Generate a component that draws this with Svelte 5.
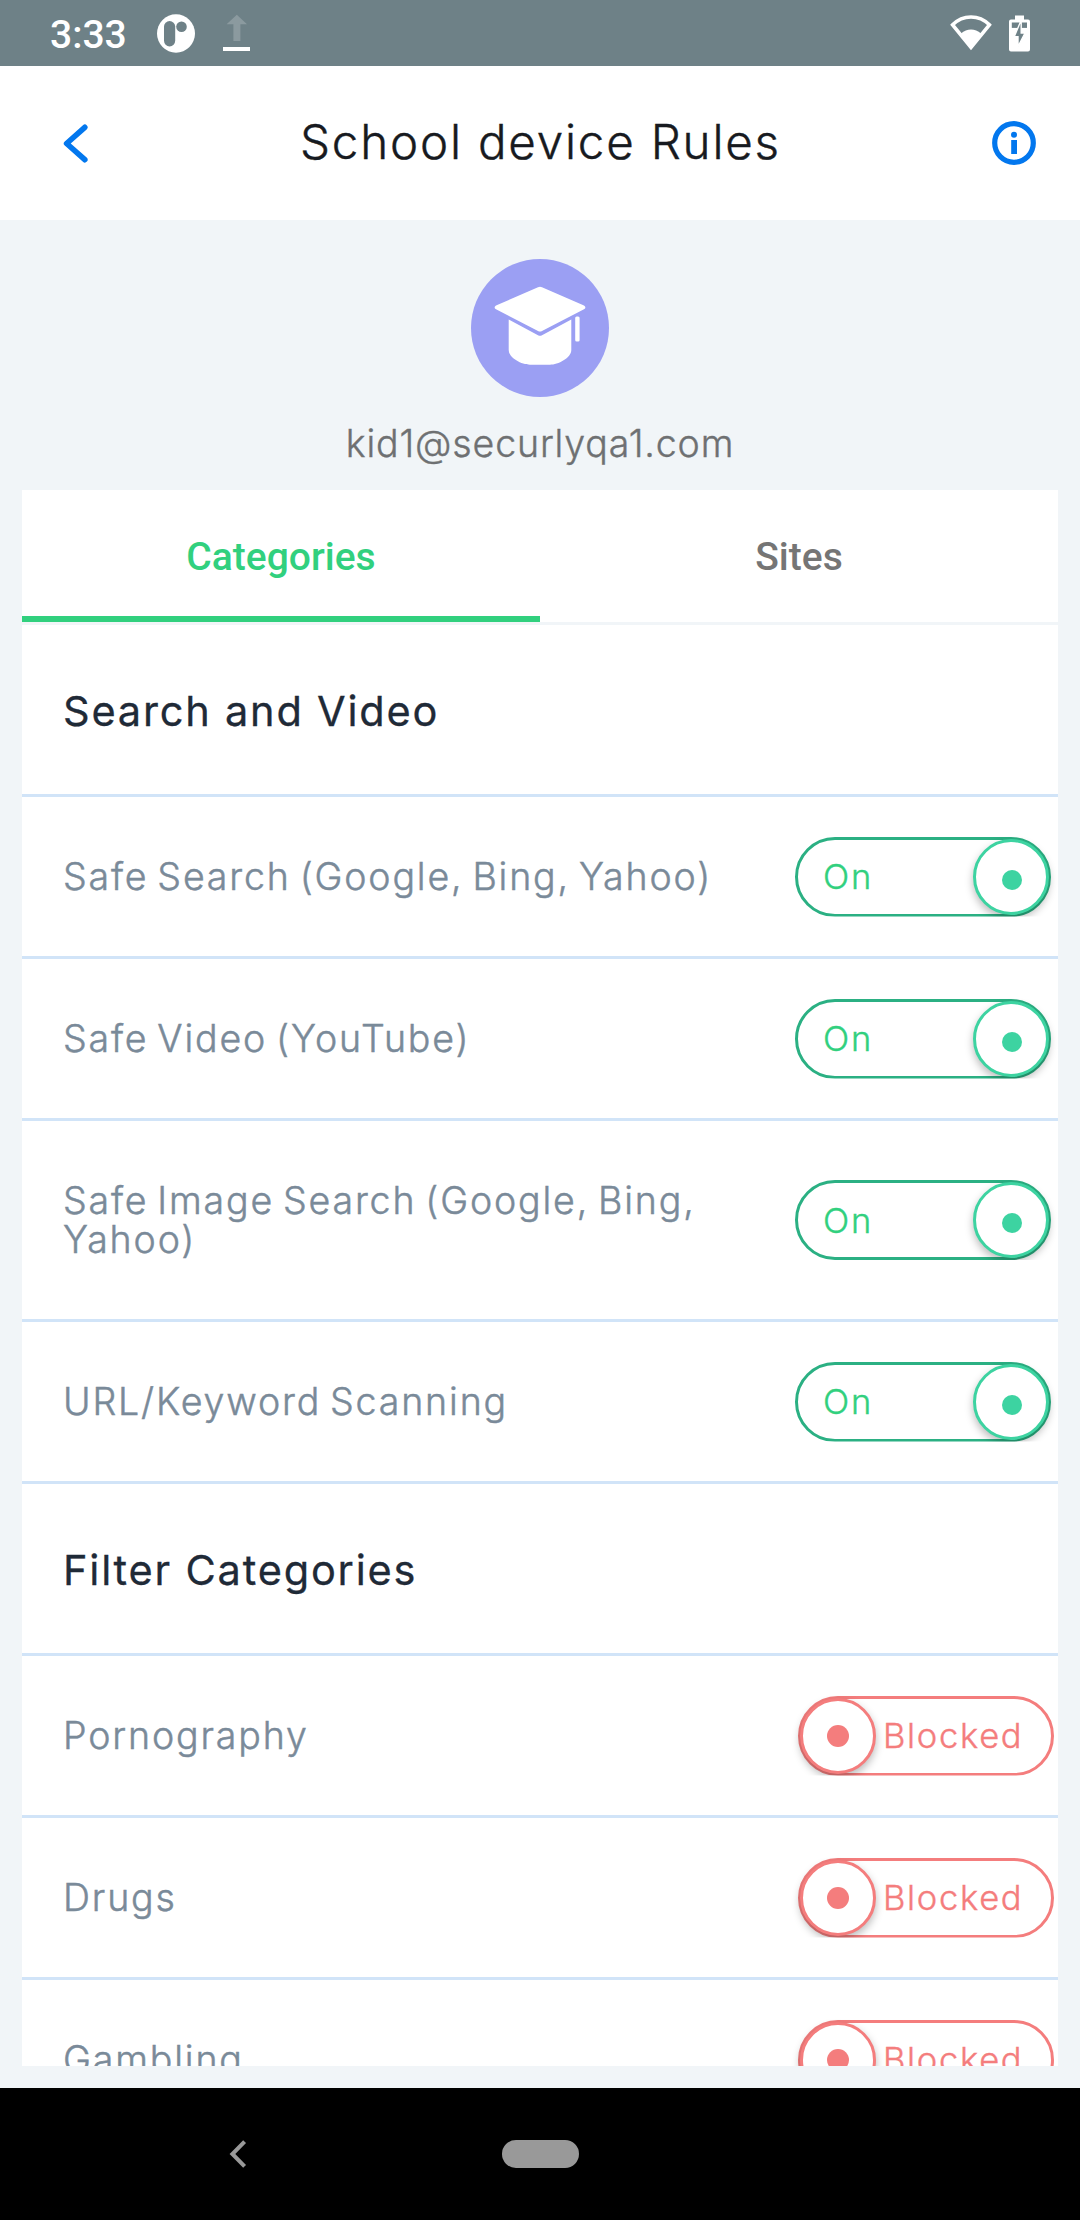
<script lang="ts">
  type Rule = { label: string; state: 'on' | 'blocked' };
  type Section = { title: string; rules: Rule[] };

  const account = 'kid1@securlyqa1.com';
  const tabs = ['Categories', 'Sites'];
  let activeTab = $state('Categories');

  const sections: Section[] = [
    {
      title: 'Search and Video',
      rules: [
        { label: 'Safe Search (Google, Bing, Yahoo)', state: 'on' },
        { label: 'Safe Video (YouTube)', state: 'on' },
        { label: 'Safe Image Search (Google, Bing, Yahoo)', state: 'on' },
        { label: 'URL/Keyword Scanning', state: 'on' }
      ]
    },
    {
      title: 'Filter Categories',
      rules: [
        { label: 'Pornography', state: 'blocked' },
        { label: 'Drugs', state: 'blocked' },
        { label: 'Gambling', state: 'blocked' }
      ]
    }
  ];
</script>

<div class="screen">
  <div class="status-bar">
    <span class="clock">3:33</span>
    <svg class="status-app" width="38" height="39" viewBox="0 0 38 39">
      <ellipse cx="19" cy="19.5" rx="19" ry="19.2" fill="#fff" />
      <rect x="7" y="7" width="11.2" height="25.4" rx="5.6" fill="#6e8187" />
      <circle cx="24.5" cy="12.8" r="5.3" fill="#6e8187" />
    </svg>
    <svg class="status-upload" width="28" height="38" viewBox="0 0 28 38">
      <path d="M13.8 0.7 L24 10.2 H17.4 V27 H10.4 V10.2 H3.6 Z" fill="#8b9a9f" />
      <rect x="0" y="33" width="27" height="4" fill="#fff" />
    </svg>
    <div class="status-right">
      <svg width="42" height="36" viewBox="0 0 42 36">
        <path d="M2.6 9.8 C13 -0.6 29 -0.6 39.4 9.8 L21 32.5 Z" fill="none" stroke="#fff" stroke-width="3.6" />
        <path d="M11 18.5 C17 13 25 13 31 18.5 L21 33 Z" fill="#fff" />
      </svg>
      <svg width="21" height="37" viewBox="0 0 21 37">
        <path d="M6 0.5 H15 V4.5 H19 Q21 4.5 21 6.5 V34.5 Q21 36.5 19 36.5 H2 Q0 36.5 0 34.5 V6.5 Q0 4.5 2 4.5 H6 Z" fill="#fff" />
        <rect x="2.8" y="7.5" width="15.2" height="5.4" fill="#6e8187" />
        <path d="M11.6 6.5 L5.2 21.8 H9 V31.5 L16 18 H12.2 V6.5 Z" fill="#6e8187" stroke="#fff" stroke-width="1.4" />
      </svg>
    </div>
  </div>

  <header>
    <button class="icon-button" aria-label="Back">
      <svg width="26" height="42" viewBox="0 0 26 42">
        <path d="M21.8 5.3 L3.6 21.5 L21.8 37.7" fill="none" stroke="#0277ee" stroke-width="5.6" stroke-linecap="round" stroke-linejoin="round" />
      </svg>
    </button>
    <h1>School device Rules</h1>
    <button class="icon-button" aria-label="Info">
      <svg width="44" height="44" viewBox="0 0 44 44">
        <circle cx="22" cy="22" r="19.3" fill="none" stroke="#0277ee" stroke-width="5.2" />
        <circle cx="22" cy="13.8" r="3" fill="#0277ee" />
        <rect x="19.2" y="19" width="5.8" height="14" fill="#0277ee" />
      </svg>
    </button>
  </header>

  <div class="profile">
    <svg width="138" height="138" viewBox="0 0 138 138">
      <circle cx="69" cy="69" r="69" fill="#9b9ff3" />
      <path d="M67 28.3 Q69 27.4 71 28.3 L113 46.6 Q115.8 48.4 113 50.2 L71 72 Q69 73 67 72 L25 50.2 Q22.2 48.4 25 46.6 Z" fill="#fff" />
      <path d="M37.7 60.5 L67 76.2 Q69 77.2 71 76.2 L100.3 60.5 V91 C100.3 99 87 105.7 79 105.7 H59 C51 105.7 37.7 99 37.7 91 Z" fill="#fff" />
      <rect x="104.2" y="57.6" width="4.4" height="25" rx="1.5" fill="#fff" />
    </svg>
    <span class="account">{account}</span>
  </div>

  <main>
    <div class="tabs">
      {#each tabs as tab}
        <button class="tab" class:active={tab === activeTab} onclick={() => (activeTab = tab)}>{tab}</button>
      {/each}
    </div>

    {#each sections as section}
      <h2>{section.title}</h2>
      {#each section.rules as rule}
        <div class="rule">
          <span class="rule-label">{rule.label}</span>
          {#if rule.state === 'on'}
            <button class="toggle on">
              <span>On</span>
              <i class="knob"></i>
            </button>
          {:else}
            <button class="toggle blocked">
              <i class="knob"></i>
              <span>Blocked</span>
            </button>
          {/if}
        </div>
      {/each}
    {/each}
  </main>

  <nav>
    <svg class="nav-back" width="18" height="28" viewBox="0 0 18 28">
      <path d="M15.6 1.6 L3.4 14 L15.6 26.4" fill="none" stroke="#999" stroke-width="4" />
    </svg>
    <div class="nav-home"></div>
  </nav>
</div>

<style>
  :global(body) {
    margin: 0;
    background: #f1f5f8;
  }

  .screen {
    display: flex;
    flex-direction: column;
    width: 1080px;
    height: 2220px;
    overflow: hidden;
    background: #f1f5f8;
    font-family: Inter, "Liberation Sans", sans-serif;
  }

  button {
    border: none;
    background: none;
    padding: 0;
    margin: 0;
    font-family: inherit;
  }

  svg {
    display: block;
    flex: none;
  }

  .status-bar {
    flex: none;
    display: flex;
    align-items: center;
    height: 66px;
    padding: 0 50px;
    box-sizing: border-box;
    background: #6e8187;
  }

  .clock {
    width: 107px;
    padding-top: 3px;
    font-family: Roboto, sans-serif;
    font-size: 39px;
    font-weight: 500;
    color: #fff;
  }

  .status-upload {
    margin-left: 28px;
  }

  .status-right {
    display: flex;
    align-items: center;
    gap: 17px;
    margin-left: auto;
  }

  header {
    flex: none;
    display: flex;
    align-items: center;
    justify-content: space-between;
    height: 154px;
    padding: 0 44px 0 63px;
    box-sizing: border-box;
    background: #fff;
  }

  h1 {
    margin: 0;
    padding-bottom: 3px;
    font-size: 47.5px;
    font-weight: 300;
    letter-spacing: 1.8px;
    color: #171a20;
    -webkit-text-stroke: 0.4px;
  }

  .profile {
    flex: none;
    display: flex;
    flex-direction: column;
    align-items: center;
    height: 270px;
    padding-top: 39px;
    box-sizing: border-box;
  }

  .account {
    margin-top: 24px;
    font-size: 37.5px;
    font-weight: 300;
    letter-spacing: 0.85px;
    line-height: 46px;
    color: #6e7072;
    -webkit-text-stroke: 0.4px;
  }

  main {
    flex: 1;
    min-height: 0;
    margin: 0 22px 22px;
    overflow: hidden;
    background: #fff;
  }

  .tabs {
    display: flex;
    height: 132px;
    border-bottom: 3px solid #f1f5f8;
  }

  .tab {
    flex: 1;
    padding-top: 8px;
    border-bottom: 6px solid transparent;
    font-family: Roboto, sans-serif;
    font-size: 39px;
    font-weight: 500;
    color: #757575;
  }

  .tab.active {
    border-color: #31d07e;
    color: #31d07e;
  }

  h2 {
    display: flex;
    align-items: center;
    height: 172px;
    margin: 0;
    padding: 2px 0 0 41px;
    box-sizing: border-box;
    border-bottom: 3px solid #d1e4f8;
    font-size: 41.5px;
    font-weight: 400;
    letter-spacing: 1.8px;
    color: #1f2a37;
    -webkit-text-stroke: 0.3px;
  }

  .rule {
    display: flex;
    align-items: center;
    justify-content: space-between;
    min-height: 162px;
    padding: 60px 4px 60px 41px;
    box-sizing: border-box;
    border-bottom: 3px solid #d1e4f8;
  }

  .rule-label {
    max-width: 670px;
    font-size: 37.5px;
    font-weight: 300;
    line-height: 39px;
    letter-spacing: 1.85px;
    word-spacing: -3.5px;
    color: #7a8a99;
    -webkit-text-stroke: 0.5px;
  }

  .toggle {
    flex: none;
    display: flex;
    align-items: center;
    width: 256px;
    height: 80px;
    margin: -21px 0;
    box-sizing: border-box;
    border-radius: 40px;
    font-size: 34.5px;
    font-weight: 300;
    letter-spacing: 1.7px;
    clip-path: inset(0 -10px 0 -10px);
    -webkit-text-stroke: 0.4px;
  }

  .toggle.on {
    justify-content: space-between;
    margin-right: 3px;
    padding-left: 25px;
    border: 3px solid #2bb083;
    color: #31d07e;
  }

  .toggle.blocked {
    gap: 8px;
    border: 3px solid #f47d7d;
    color: #f47d7d;
  }

  .knob {
    display: flex;
    align-items: center;
    justify-content: center;
    flex: none;
    width: 76px;
    height: 76px;
    margin: -1px;
    box-sizing: border-box;
    border: 3px solid;
    border-radius: 50%;
    background: #fff;
    box-shadow: 0 4px 8px rgba(0, 0, 0, 0.28);
  }

  .knob::after {
    content: "";
    width: 20px;
    height: 20px;
    border-radius: 50%;
    background: currentColor;
  }

  .on .knob {
    color: #3dd3a1;
  }

  .on .knob::after {
    margin: 6px 0 0 2px;
  }

  .blocked .knob::after {
    width: 22px;
    height: 22px;
  }

  nav {
    flex: none;
    display: flex;
    align-items: center;
    height: 132px;
    background: #000;
  }

  .nav-back {
    margin-left: 229px;
  }

  .nav-home {
    width: 77px;
    height: 28px;
    margin-left: 255px;
    border-radius: 14px;
    background: #999;
  }
</style>
